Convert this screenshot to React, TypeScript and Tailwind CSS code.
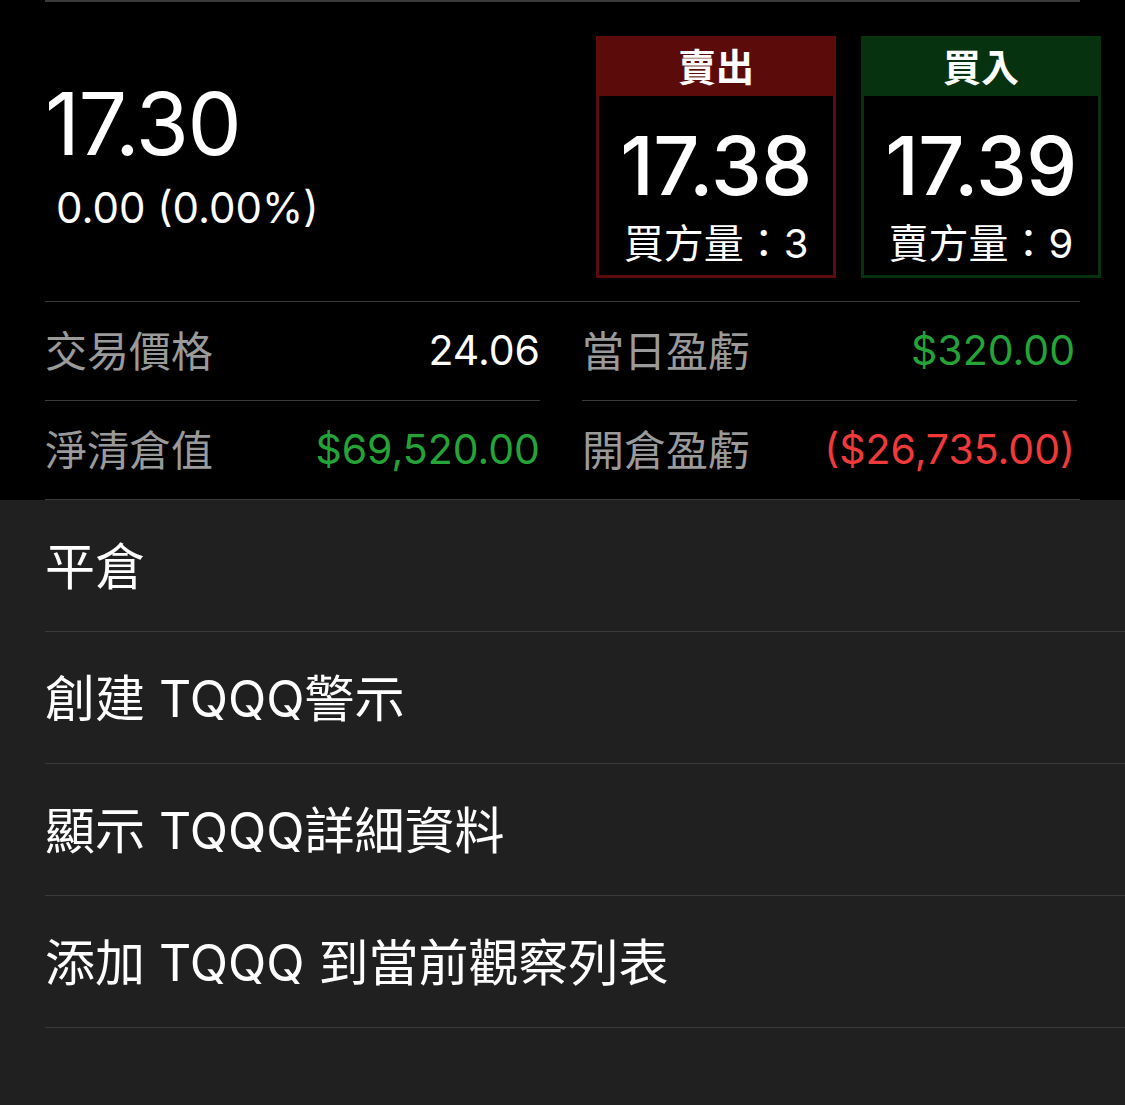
import React from "react";

const FONT = { fontFamily: 'Inter, "Noto Sans CJK TC", "Noto Sans CJK SC", sans-serif' };

function QuoteBox({ title, price, qtyLabel, qty, tone }: { title: string; price: string; qtyLabel: string; qty: string; tone: "sell" | "buy" }) {
  const border = tone === "sell" ? "border-[#5c0b0b]" : "border-[#07320f]";
  const head = tone === "sell" ? "bg-[#5c0b0b]" : "bg-[#07320f]";
  return (
    <div className={`flex flex-col w-[240px] h-[242px] border-[3px] ${border}`}>
      <div className={`${head} h-[57px] flex items-center justify-center text-[38px] font-bold text-white`}>{title}</div>
      <div className="flex-1 flex flex-col items-center bg-black">
        <div className="text-[81px] font-medium leading-none text-white mt-[30px] tracking-[-0.5px]">{price}</div>
        <div className="text-[40px] leading-none text-white mt-[17px]">
          {qtyLabel}：{qty}
        </div>
      </div>
    </div>
  );
}

function Stat({ label, value, color }: { label: string; value: string; color: string }) {
  return (
    <div className="flex items-center justify-between h-[98px]">
      <span className="text-[42px] text-[#9a9a9a]">{label}</span>
      <span className={`text-[41px] ${color}`}>{value}</span>
    </div>
  );
}

const menu = ["平倉", "創建 TQQQ警示", "顯示 TQQQ詳細資料", "添加 TQQQ 到當前觀察列表"];

export default function App() {
  return (
    <div className="w-[1125px] h-[1105px] overflow-hidden bg-[#202020]" style={FONT}>
      <div className="bg-black">
        <div className="mx-[45px] h-[2px] bg-[#3a3a3a]" />
        <div className="flex justify-between pl-[45px] pr-[24px] pt-[34px] pb-[23px]">
          <div className="flex flex-col text-white">
            <div className="text-[86px] leading-none mt-[45px] tracking-[-1.5px]">17.30</div>
            <div className="text-[42px] leading-none mt-[20px] ml-[11px]">0.00 (0.00%)</div>
          </div>
          <div className="flex gap-[25px]">
            <QuoteBox title="賣出" price="17.38" qtyLabel="買方量" qty="3" tone="sell" />
            <QuoteBox title="買入" price="17.39" qtyLabel="賣方量" qty="9" tone="buy" />
          </div>
        </div>
        <div className="mx-[45px] border-t border-[#3a3a3a] grid grid-cols-[495px_495px] gap-x-[42px]">
          <div className="border-b border-[#3a3a3a]">
            <Stat label="交易價格" value="24.06" color="text-white" />
          </div>
          <div className="border-b border-[#3a3a3a] pr-[2px]">
            <Stat label="當日盈虧" value="$320.00" color="text-[#25a336]" />
          </div>
          <Stat label="淨清倉值" value="$69,520.00" color="text-[#25a336]" />
          <div className="pr-[2px]">
            <Stat label="開倉盈虧" value="($26,735.00)" color="text-[#f03a3a]" />
          </div>
        </div>
        <div className="mx-[45px] border-t border-[#3a3a3a]" />
      </div>
      <div className="pl-[45px]">
        {menu.map((m) => (
          <div key={m} className="h-[132px] flex items-center pt-[4px] border-b border-[#3a3a3a] text-[50px] text-white">
            {m}
          </div>
        ))}
      </div>
    </div>
  );
}
